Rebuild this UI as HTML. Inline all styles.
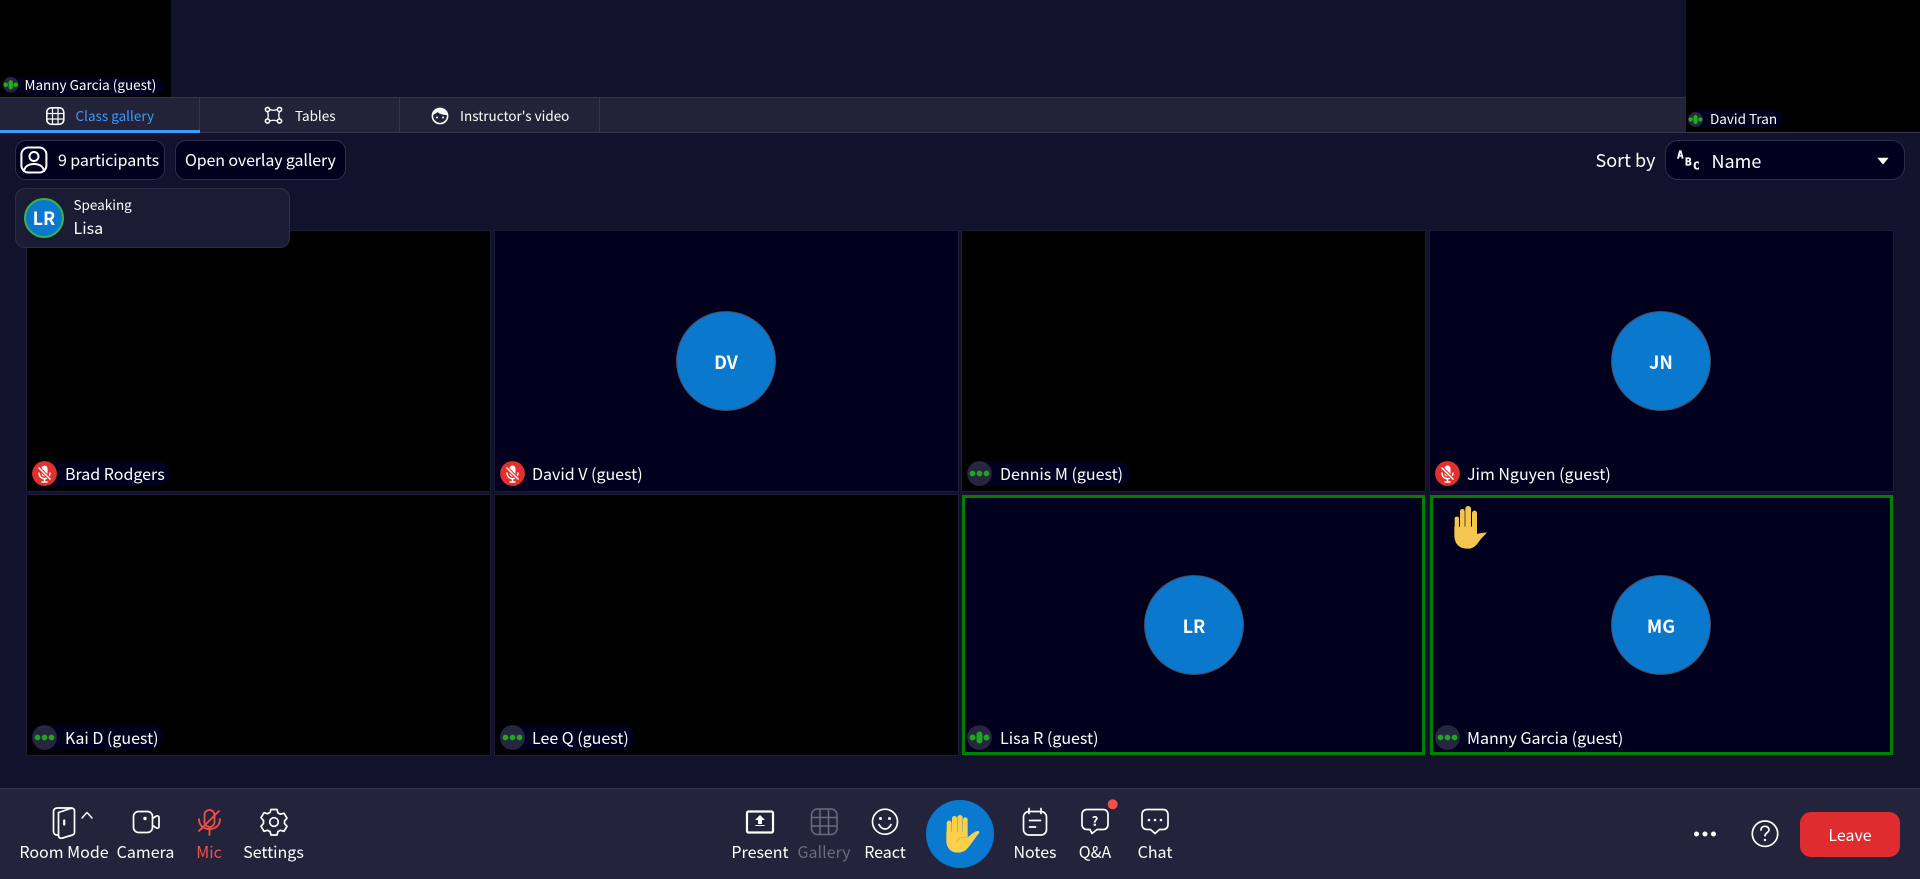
<!DOCTYPE html>
<html><head><meta charset="utf-8"><style>
*{box-sizing:border-box;margin:0;padding:0}
html,body{width:1920px;height:879px;overflow:hidden;background:#12122d}
body{position:relative;font-family:"Liberation Sans","Noto Sans CJK JP",sans-serif;color:#fff}
body,.t{font-family:"Noto Sans CJK JP","Liberation Sans",sans-serif}
.a{position:absolute}
.t{position:absolute;white-space:nowrap;line-height:24px;height:24px;font-size:16px;color:#fff}
.s{font-size:13.5px}
.c{transform:translateX(-50%)}
.cell{position:absolute;width:465px;border:1px solid #1c1c38}
.r1{top:230px;height:262px}.r2{top:494px;height:262px}
.k{background:#000}.n{background:#00001e}
.g{border:3px solid #008000;width:463px;height:260px;top:495px}
.av{position:absolute;width:100px;height:100px;border-radius:50%;background:#0a78cc;border:1px solid #4a4a62;font-weight:700;font-size:18px;line-height:100px;text-align:center;color:#fff}
.pill{position:absolute;background:#00001e;border-radius:12px}
.btn{position:absolute;background:#00001e;border:1px solid #2e2e48;border-radius:11px}
svg{position:absolute;left:0;top:0}
</style></head><body>

<div class="a k" style="left:0;top:0;width:171px;height:97px"></div>
<div class="a" style="left:0;top:97px;width:1686px;height:36px;background:#222239;border-top:1px solid #35354d;border-bottom:1px solid #35354d"></div>
<div class="a" style="left:199px;top:98px;width:1px;height:34px;background:#35354d"></div>
<div class="a" style="left:399px;top:98px;width:1px;height:34px;background:#35354d"></div>
<div class="a" style="left:599px;top:98px;width:1px;height:34px;background:#35354d"></div>
<div class="a" style="left:0;top:130px;width:200px;height:3px;background:#3b9cff"></div>
<div class="a k" style="left:1686px;top:0;width:234px;height:132px"></div>
<div class="a" style="left:1686px;top:132px;width:234px;height:1px;background:#35354d"></div>

<div class="pill" style="left:3px;top:77px;width:160px;height:18px;border-radius:9px"></div>
<div class="pill" style="left:1688px;top:110px;width:95px;height:18px;border-radius:9px"></div>

<div class="cell k r1" style="left:26px"></div>
<div class="cell n r1" style="left:494px"></div>
<div class="cell k r1" style="left:961px"></div>
<div class="cell n r1" style="left:1429px"></div>
<div class="cell k r2" style="left:26px"></div>
<div class="cell k r2" style="left:494px"></div>
<div class="cell n g" style="left:962px"></div>
<div class="cell n g" style="left:1430px"></div>

<div class="av" style="left:676px;top:311px">DV</div>
<div class="av" style="left:1611px;top:311px">JN</div>
<div class="av" style="left:1144px;top:575px">LR</div>
<div class="av" style="left:1611px;top:575px">MG</div>

<div class="pill" style="left:32px;top:461px;width:138px;height:25px"></div>
<div class="pill" style="left:500px;top:461px;width:150px;height:25px"></div>
<div class="pill" style="left:967px;top:461px;width:163px;height:25px"></div>
<div class="pill" style="left:1435px;top:461px;width:182px;height:25px"></div>
<div class="pill" style="left:32px;top:725px;width:131px;height:25px"></div>
<div class="pill" style="left:500px;top:725px;width:135px;height:25px"></div>

<div class="a" style="left:0;top:788px;width:1920px;height:91px;background:#23233b;border-top:1px solid #35354d"></div>

<div class="btn" style="left:15px;top:140px;width:150px;height:40px"></div>
<div class="btn" style="left:175px;top:140px;width:171px;height:40px"></div>
<div class="btn" style="left:1665px;top:140px;width:240px;height:40px;border-radius:13px"></div>
<div class="a" style="left:15px;top:188px;width:275px;height:60px;background:#1b1b33;border:1px solid #2e2e48;border-radius:10px"></div>
<div class="a" style="left:24px;top:198px;width:40px;height:40px;border-radius:50%;background:#0a78cc;border:2px solid #3cb44b;font-weight:700;font-size:18px;line-height:37px;text-align:center">LR</div>
<div class="a" style="left:1800px;top:812px;width:100px;height:45px;background:#e02b2f;border-radius:11px"></div>

<svg width="1920" height="879" viewBox="0 0 1920 879" fill="none">
<defs>
<symbol id="mute" viewBox="0 0 25 25"><circle cx="12.500" cy="12.500" r="12.400" fill="#e2302f"/><rect x="9.500" y="4.500" width="6" height="11" rx="3" fill="#fff"/><path d="M7 11.500c0 4 2.500 6.200 5.500 6.200s5.500-2.200 5.500-6.200M12.500 17.700v3.300M9.500 21h6" stroke="#fff" stroke-width="1.500"/><path d="M6.500 6.500l12 12" stroke="#e2302f" stroke-width="3.500"/><path d="M6.500 6.500l12 12" stroke="#fff" stroke-width="1.500"/></symbol>
<symbol id="dots" viewBox="0 0 25 25"><circle cx="12.500" cy="12.500" r="12.400" fill="#26263e"/><circle cx="5.500" cy="12.500" r="2.900" fill="#1fa61f"/><circle cx="12.500" cy="12.500" r="2.900" fill="#1fa61f"/><circle cx="19.500" cy="12.500" r="2.900" fill="#1fa61f"/></symbol>
<symbol id="talk" viewBox="0 0 25 25"><circle cx="12.500" cy="12.500" r="12.400" fill="#26263e"/><circle cx="5.500" cy="12.500" r="3" fill="#1fa61f"/><rect x="9.500" y="6.500" width="6" height="12" rx="3" fill="#1fa61f"/><circle cx="19.500" cy="12.500" r="3" fill="#1fa61f"/></symbol>
<symbol id="talks" viewBox="0 0 25 25"><circle cx="12.500" cy="12.500" r="12.400" fill="#26263e"/><circle cx="4.500" cy="12.500" r="3.600" fill="#22ac22"/><rect x="9" y="5" width="7" height="15" rx="3.500" fill="#22ac22"/><circle cx="20.500" cy="12.500" r="3.600" fill="#22ac22"/></symbol>
<symbol id="hand" viewBox="160 105 105 135" preserveAspectRatio="none"><g fill="#f3c64e"><rect x="165" y="140" width="13" height="50" rx="6"/><rect x="181" y="117" width="14" height="70" rx="7"/><rect x="197" y="108" width="17" height="80" rx="8"/><rect x="217" y="122" width="15" height="70" rx="7"/><path d="M164 170h68v22c10-3 19-4 30-5c-10 12-20 20-28 33c-7 10-17 16-29 16c-31 0-41-20-41-40z"/></g></symbol>
<symbol id="hand2" viewBox="45 42 106 118" preserveAspectRatio="none"><g fill="#fbd04a"><rect x="50" y="62" width="15" height="60" rx="7.500"/><rect x="66" y="48" width="15" height="70" rx="7.500"/><rect x="82" y="45" width="16" height="70" rx="8"/><rect x="99" y="52" width="14" height="70" rx="7"/><path d="M49 95H113V112C122 105 133 95 142 93C148 92 150 97 146 101C135 115 125 130 113 145C105 154 95 158 83 158C62 158 49 143 49 122Z"/></g><path d="M80 125C85 112 100 110 113 112" stroke="#e6b238" stroke-width="2.500"/></symbol>
</defs>

<!-- top labels -->
<use href="#talks" x="3" y="77" width="15.500" height="15.500"/>
<use href="#talks" x="1688" y="112" width="15" height="15"/>

<!-- tabs -->
<g stroke="#fff" stroke-width="1.600">
<rect x="46.800" y="107.800" width="17" height="16.500" rx="4.500"/>
<path d="M52.500 108v16M58 108v16M47 113.500h17M47 119h17" stroke-width="1.200"/>
<path d="M269.500 109.500Q273.500 111 277.500 109.500M269.500 121Q273.500 119.500 277.500 121M267.500 111.800Q269 115.300 267.500 118.800M279.500 111.800Q278 115.300 279.500 118.800" stroke-width="1.300"/>
<circle cx="267.500" cy="109.500" r="2.100"/><circle cx="279.500" cy="109.500" r="2.100"/><circle cx="267.500" cy="121" r="2.100"/><circle cx="279.500" cy="121" r="2.100"/>
<circle cx="440" cy="116" r="7.600"/>
</g>
<path d="M432.500 115c2-.5 3.500-1.500 5-3 2 2 6 3 10 3c0-4-3.500-7-7.500-7s-7.500 3-7.500 7z" fill="#fff"/>
<circle cx="437" cy="117.500" r="1" fill="#fff"/><circle cx="443" cy="117.500" r="1" fill="#fff"/>

<!-- participants -->
<rect x="21.400" y="147.500" width="25" height="25" rx="7" stroke="#fff" stroke-width="2"/>
<circle cx="34" cy="156.500" r="4.500" stroke="#fff" stroke-width="2"/>
<path d="M24 172c0-5 4-8 10-8s10 3 10 8" stroke="#fff" stroke-width="2"/>

<!-- ABC -->
<g fill="#fff" stroke="#fff" stroke-width=".3" font-family="'DejaVu Sans Mono',monospace" font-weight="700" font-size="11">
<text x="1677" y="158.500">A</text><text x="1685" y="165.500">B</text><text x="1693" y="169.500">C</text>
</g>
<path d="M1878 158h10l-5 6z" fill="#fff" stroke="#fff" stroke-width=".6" stroke-linejoin="round"/>

<!-- cell labels -->
<use href="#mute" x="32" y="461" width="25" height="25"/>
<use href="#mute" x="500" y="461" width="25" height="25"/>
<use href="#dots" x="967" y="461" width="25" height="25"/>
<use href="#mute" x="1435" y="461" width="25" height="25"/>
<use href="#dots" x="32" y="725" width="25" height="25"/>
<use href="#dots" x="500" y="725" width="25" height="25"/>
<use href="#talk" x="967" y="725" width="25" height="25"/>
<use href="#dots" x="1435" y="725" width="25" height="25"/>

<use href="#hand" x="1453" y="505" width="35" height="45"/>

<!-- room -->
<g stroke="#fff" stroke-width="1.700" stroke-linejoin="round" stroke-linecap="round">
<path d="M72 808H57c-2 0-3.500 1.500-3.500 3.500v20c0 2 1.500 3.500 3.500 3.500h1.500"/>
<path d="M58.500 812.500l12-4c2.500-.800 4 .500 4 2.500v21c0 1.500-.700 2.500-2 3l-10 3c-2.500.700-4-.500-4-2.500z"/>
<path d="M64.200 820.500v4" stroke-width="2.200"/>
<path d="M82 818l5-5.500 5 5.500" stroke-width="1.500"/>
<rect x="133.500" y="811.500" width="19" height="21" rx="5"/>
<path d="M152.500 818.500l4-2.500c1-.5 2.500 0 2.500 1.500v9c0 1.500-1.500 2-2.500 1.500l-4-2.500"/>
<circle cx="145" cy="818.500" r="1.700" fill="#fff" stroke="none"/>
<!-- gear -->
<path d="M271 810h6l1 3.500 2.500 1.200 3.500-1 3 5-2.500 2.800v2.500l2.500 2.800-3 5-3.500-1-2.500 1.200-1 3.500h-6l-1-3.500-2.500-1.200-3.500 1-3-5 2.500-2.800V821l-2.500-2.800 3-5 3.500 1 2.500-1.200z" transform="translate(0 -.500)"/>
<circle cx="274" cy="822" r="4.300"/>
<!-- present -->
<rect x="747" y="811.500" width="26" height="21" rx="1.500" stroke-width="2.200"/>
<!-- react -->
<circle cx="885" cy="821.700" r="12.500"/>
<path d="M879 824.500c1.500 3 3.500 4.500 6 4.500s4.500-1.500 6-4.500"/>
<!-- notes -->
<rect x="1023.500" y="811.500" width="23" height="23.500" rx="5.500"/>
<path d="M1029 808.500v5M1041 808.500v5M1029.500 820.500h11M1029.500 827h6"/>
<!-- qa -->
<path d="M1087 809.500h16c3 0 5 2 5 5v10c0 3-2 5-5 5h-6l-5 4-2-4h-3c-3 0-5-2-5-5v-10c0-3 2-5 5-5z"/>
<!-- chat -->
<path d="M1147 809.500h16c3 0 5 2 5 5v10c0 3-2 5-5 5h-3.500l-4.500 4-4.500-4H1147c-3 0-5-2-5-5v-10c0-3 2-5 5-5z"/>
<!-- help -->
<circle cx="1765" cy="833.700" r="12.700"/>
<path d="M1761 830c0-2.500 2-3.700 4-3.700 2.300 0 4 1.500 4 3.500 0 3-4 3-4 6"/>
</g>
<circle cx="1765" cy="840" r="1.200" fill="#fff"/>
<path d="M760 815l5 5h-3v4h-4v-4h-3z" fill="#fff"/><rect x="755.500" y="825" width="9" height="1" fill="#fff"/>
<circle cx="880.500" cy="818.500" r="1.500" fill="#fff"/><circle cx="889.500" cy="818.500" r="1.500" fill="#fff"/>
<circle cx="1149" cy="820" r="1.300" fill="#fff"/><circle cx="1155" cy="820" r="1.300" fill="#fff"/><circle cx="1161" cy="820" r="1.300" fill="#fff"/>
<circle cx="1112.700" cy="804.300" r="5" fill="#f4504a"/>
<circle cx="1696.500" cy="834" r="2.500" fill="#fff"/><circle cx="1705" cy="834" r="2.500" fill="#fff"/><circle cx="1713.500" cy="834" r="2.500" fill="#fff"/>

<!-- mic -->
<g stroke="#f4504a" stroke-width="1.800" stroke-linecap="round">
<rect x="204.500" y="810" width="10" height="17" rx="5"/>
<path d="M199 819c0 6 4 10 10.500 10s10.500-4 10.500-10M209.500 829v6M199 831l20-20"/>
</g>

<!-- gallery -->
<g stroke="#6a6a7e" stroke-width="1.500">
<rect x="811.500" y="809" width="25.500" height="25.500" rx="6"/>
<path d="M820 809v25.500M828.500 809v25.500M811.500 817.500h25.500M811.500 826h25.500"/>
</g>

<circle cx="960" cy="834" r="34" fill="#0a7ad0"/>
<use href="#hand2" x="945" y="814" width="35.300" height="39.300"/>
</svg>

<!-- text -->
<div class="t s" style="left:24.500px;top:72px">Manny Garcia (guest)</div>
<div class="t s" style="left:1710px;top:106px">David Tran</div>
<div class="t s" style="left:75.500px;top:103px;color:#3b9cff">Class gallery</div>
<div class="t s" style="left:295px;top:103px">Tables</div>
<div class="t s" style="left:460px;top:103px">Instructor's video</div>
<div class="t" style="left:58px;top:147px;letter-spacing:-.08px">9 participants</div>
<div class="t" style="left:185px;top:147px;letter-spacing:-.12px">Open overlay gallery</div>
<div class="t s" style="left:73.500px;top:192px">Speaking</div>
<div class="t" style="left:73.500px;top:215px">Lisa</div>
<div class="t" style="left:1595.500px;top:148px;font-size:18px">Sort by</div>
<div class="t" style="left:1711.500px;top:149px;font-size:18px">Name</div>

<div class="t" style="left:65px;top:461px">Brad Rodgers</div>
<div class="t" style="left:532px;top:461px">David V (guest)</div>
<div class="t" style="left:1000px;top:461px">Dennis M (guest)</div>
<div class="t" style="left:1467px;top:461px">Jim Nguyen (guest)</div>
<div class="t" style="left:65px;top:725px">Kai D (guest)</div>
<div class="t" style="left:532px;top:725px">Lee Q (guest)</div>
<div class="t" style="left:1000px;top:725px">Lisa R (guest)</div>
<div class="t" style="left:1467px;top:725px">Manny Garcia (guest)</div>

<div class="t c" style="left:64px;top:839px">Room Mode</div>
<div class="t c" style="left:145.500px;top:839px">Camera</div>
<div class="t c" style="left:209px;top:839px;color:#f4504a">Mic</div>
<div class="t c" style="left:273.500px;top:839px">Settings</div>
<div class="t c" style="left:760px;top:839px">Present</div>
<div class="t c" style="left:824px;top:839px;color:#6a6a7e">Gallery</div>
<div class="t c" style="left:885px;top:839px">React</div>
<div class="t c" style="left:1035px;top:839px">Notes</div>
<div class="t c" style="left:1095px;top:839px">Q&amp;A</div>
<div class="t c" style="left:1155px;top:839px">Chat</div>
<div class="t c" style="left:1850px;top:822px">Leave</div>
<div class="t c" style="left:1095px;top:809px;font-size:13px;font-weight:700">?</div>
</body></html>
